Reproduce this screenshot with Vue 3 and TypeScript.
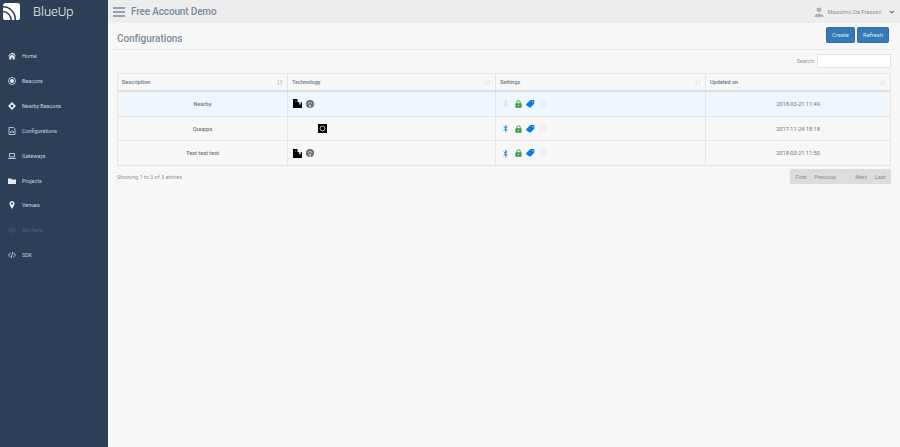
<template>
  <div class="layout">
    <aside class="sidebar">
      <div class="brand">
        <svg class="brand-logo" viewBox="0 0 20 20" width="17" height="17">
          <rect x="0" y="0" width="20" height="20" rx="3" fill="#fff" />
          <path d="M0 4.5C8 4.5 14.5 11 14.5 20M0 10C5 10 9.5 14.5 9.5 20" fill="none" stroke="#2c3f56" stroke-width="1.8" />
        </svg>
        <span class="brand-name">BlueUp</span>
      </div>
      <nav class="nav">
        <a v-for="item in navItems" :key="item.label" class="nav-item" :class="{ disabled: item.disabled }">
          <svg class="nav-icon" viewBox="0 0 16 16" width="8" height="8" v-html="item.icon"></svg>
          <span>{{ item.label }}</span>
        </a>
      </nav>
    </aside>

    <div class="main">
      <header class="topbar">
        <div class="topbar-left">
          <svg class="burger" viewBox="0 0 12 10" width="12" height="10">
            <path d="M0 1h12M0 5h12M0 9h12" stroke="#7a8a9b" stroke-width="1.4" />
          </svg>
          <span class="account">Free Account Demo</span>
        </div>
        <div class="user">
          <svg viewBox="0 0 12 12" width="10" height="10">
            <circle cx="6" cy="3.4" r="2.9" fill="#b0b0b0" />
            <path d="M0.5 12c0-3 2-4 5.5-4s5.5 1 5.5 4z" fill="#b0b0b0" />
          </svg>
          <span class="user-name">Massimo Da Frassini</span>
          <svg viewBox="0 0 10 6" width="5.5" height="4" class="chev">
            <path d="M1 1l4 3.6L9 1" fill="none" stroke="#5a6878" stroke-width="2" />
          </svg>
        </div>
      </header>

      <section class="content">
        <div class="title-row">
          <h3>Configurations</h3>
          <div class="actions">
            <button class="btn">Create</button>
            <button class="btn">Refresh</button>
          </div>
        </div>

        <div class="search-row">
          <label>Search:</label>
          <input type="text" />
        </div>

        <table class="grid">
          <colgroup>
            <col style="width: 170px" />
            <col style="width: 208px" />
            <col style="width: 210px" />
            <col />
          </colgroup>
          <thead>
            <tr>
              <th v-for="(h, i) in headers" :key="h">
                <span>{{ h }}</span>
                <svg class="sort" viewBox="0 0 7 6" width="6" height="5.5">
                  <path d="M1.5 0v5.5M0.3 4.3l1.2 1.4 1.2-1.4M5 6V0.5M3.8 1.7 5 0.3l1.2 1.4" fill="none" :stroke="i === 0 ? '#b4bbc3' : '#e0e0e0'" stroke-width="0.9" />
                </svg>
              </th>
            </tr>
          </thead>
          <tbody>
            <tr v-for="row in rows" :key="row.name" :class="{ selected: row.selected }">
              <td class="center name">{{ row.name }}</td>
              <td class="tech">
                <template v-if="row.quuppa">
                  <svg class="quuppa" viewBox="0 0 10 10" width="9" height="9">
                    <rect width="10" height="10" fill="#000" />
                    <circle cx="5" cy="5" r="2.7" fill="none" stroke="#ccc" stroke-width="1" />
                  </svg>
                </template>
                <template v-else>
                  <svg viewBox="0 0 10 10" width="9" height="9">
                    <path d="M0 0h5v3.5h2V6h1.5V3.5H10V10H0z" fill="#000" />
                    <path d="M2 1.5h1.5V3H2z" fill="#555" />
                  </svg>
                  <svg viewBox="0 0 10 10" width="8" height="8">
                    <circle cx="5" cy="5" r="5" fill="#6d6d6d" />
                    <path d="M2.5 5.5a2.5 2.5 0 0 1 5 0" fill="none" stroke="#ddd" stroke-width="0.9" />
                    <path d="M4 9V6h2v3z" fill="#ddd" />
                  </svg>
                </template>
              </td>
              <td class="settings">
                <svg class="bt" viewBox="0 0 8 12" width="5" height="9">
                  <path d="M0.8 3l6 5.5L4 11V1l2.8 2.5L0.8 9" fill="none" :stroke="row.selected ? '#d9dcdf' : '#2f8ee8'" stroke-width="1.5" />
                </svg>
                <svg class="lock" viewBox="0 0 10 11" width="7" height="8">
                  <path d="M2.5 5V3.2a2.5 2.5 0 0 1 5 0V5" fill="none" stroke="#3c9a48" stroke-width="1.3" />
                  <rect x="0.5" y="4.5" width="9" height="6.5" rx="1" fill="#3c9a48" />
                  <circle cx="5" cy="7.6" r="1" fill="#dff0e0" />
                </svg>
                <svg class="tag" viewBox="0 0 12 11" width="8.5" height="8">
                  <path d="M0.8 5.2 5 1.2 6.6 0H10.6a1.2 1.2 0 0 1 1.2 1.2V4.6L11 6 6.8 10.2a1.7 1.7 0 0 1-2.4 0L.8 7.6a1.7 1.7 0 0 1 0-2.4z" fill="#0a7be6" />
                  <circle cx="9.6" cy="2.2" r="0.8" fill="#dcecfb" />
                </svg>
                <svg class="clock" viewBox="0 0 10 10" width="7.5" height="7.5">
                  <circle cx="5" cy="5" r="4.4" fill="none" stroke="#d8dbde" stroke-width="0.9" />
                  <path d="M5 2.6V5l1.5 1" fill="none" stroke="#d8dbde" stroke-width="0.8" />
                </svg>
              </td>
              <td class="center date">{{ row.updated }}</td>
            </tr>
          </tbody>
        </table>

        <div class="table-footer">
          <span class="info">Showing 1 to 3 of 3 entries</span>
          <div class="pager">
            <span>First</span>
            <span>Previous</span>
            <span class="current">1</span>
            <span>Next</span>
            <span>Last</span>
          </div>
        </div>
      </section>
    </div>
  </div>
</template>

<script setup lang="ts">
interface NavItem {
  label: string
  icon: string
  disabled?: boolean
}

const code = '<path d="M5 3.5 1 8l4 4.5M11 3.5 15 8l-4 4.5M9.5 2 6.5 14" fill="none" stroke="currentColor" stroke-width="1.5"/>'

const navItems: NavItem[] = [
  { label: 'Home', icon: '<path d="M8 1 0 8l1 1.2L8 3.5l7 5.7L16 8l-3-2.6V2h-2v1.7zM2.5 9.6V15h4v-4h3v4h4V9.6L8 5z" fill="currentColor"/>' },
  { label: 'Beacons', icon: '<circle cx="8" cy="8" r="7" fill="none" stroke="currentColor" stroke-width="1.6"/><circle cx="8" cy="8" r="4" fill="currentColor"/>' },
  { label: 'Nearby Beacons', icon: '<path d="M8 0l8 8-8 8-8-8z" fill="currentColor"/><circle cx="8" cy="8" r="2.6" fill="#2c3f56"/>' },
  { label: 'Configurations', icon: '<path d="M2 1h9l3 3v11H2z" fill="none" stroke="currentColor" stroke-width="1.5"/><path d="M5 12V9M8 12V6M11 12V8" stroke="currentColor" stroke-width="1.4"/>' },
  { label: 'Gateways', icon: '<path d="M3 3h10v7H3z" fill="none" stroke="currentColor" stroke-width="1.6"/><path d="M0 12h16v1.5H0z" fill="currentColor"/>' },
  { label: 'Projects', icon: '<path d="M0 3h6l2 2h8v9H0z" fill="currentColor"/>' },
  { label: 'Venues', icon: '<path d="M8 0a5 5 0 0 1 5 5c0 4-5 11-5 11S3 9 3 5a5 5 0 0 1 5-5z" fill="currentColor"/><circle cx="8" cy="5" r="2" fill="#2c3f56"/>' },
  { label: 'Api Keys', icon: code, disabled: true },
  { label: 'SDK', icon: code },
]

const headers = ['Description', 'Technology', 'Settings', 'Updated on']

const rows = [
  { name: 'Nearby', updated: '2018-03-21 11:49', selected: true, quuppa: false },
  { name: 'Quuppa', updated: '2017-11-24 18:18', selected: false, quuppa: true },
  { name: 'Test test test', updated: '2018-03-21 11:50', selected: false, quuppa: false },
]
</script>

<style>
html, body {
  margin: 0;
  height: 100%;
  background: #f7f7f7;
}
#app {
  height: 100%;
}
</style>

<style scoped>
.layout {
  display: flex;
  height: 447px;
  overflow: hidden;
  font-family: Roboto, "Liberation Sans", sans-serif;
  font-size: 6px;
  color: #6a7582;
}
.sidebar {
  width: 108px;
  flex: none;
  background: #2c3f56;
  color: #cfd6dd;
}
.brand {
  display: flex;
  align-items: center;
  height: 22px;
  padding-left: 3px;
}
.brand-logo {
  flex: none;
}
.brand-name {
  margin-left: 13px;
  font-size: 13px;
  font-weight: 300;
  color: #f2f4f6;
}
.nav {
  display: flex;
  flex-direction: column;
  margin-top: 22px;
}
.nav-item {
  display: flex;
  align-items: center;
  height: 24.85px;
  padding-left: 7.5px;
  gap: 6.5px;
  font-size: 5.4px;
}
.nav-item.disabled {
  color: #55677c;
}
.nav-icon {
  flex: none;
  color: #e6eaee;
}
.disabled .nav-icon {
  color: #55677c;
}
.main {
  flex: 1;
  min-width: 0;
}
.topbar {
  display: flex;
  justify-content: space-between;
  align-items: center;
  height: 23px;
  box-sizing: border-box;
  padding: 0 6px 0 5px;
  background: #ededed;
}
.topbar-left {
  display: flex;
  align-items: center;
  gap: 6px;
}
.account {
  font-size: 10px;
  font-weight: 500;
  letter-spacing: -0.15px;
  color: #7a8a9b;
}
.user {
  display: flex;
  align-items: center;
  gap: 4px;
}
.user-name {
  font-size: 5.8px;
  color: #8a939d;
}
.chev {
  margin-left: 3px;
}
.content {
  padding: 0 9px;
}
.title-row {
  display: flex;
  justify-content: space-between;
  align-items: flex-start;
  height: 22px;
  margin: 0 -4px 0 -5px;
  padding: 4px 6px 0 5px;
  border-bottom: 1px solid #e9e9e9;
}
h3 {
  margin: 6px 0 0;
  font-size: 10px;
  font-weight: 500;
  letter-spacing: -0.05px;
  color: #7a8a9b;
}
.actions {
  display: flex;
  gap: 2px;
}
.btn {
  height: 16px;
  width: 29px;
  padding: 0;
  border: 1px solid #2e6da4;
  border-radius: 1.5px;
  background: #337ab7;
  color: #dfe8f1;
  font-family: inherit;
  font-size: 5.8px;
}
.btn + .btn {
  width: 32px;
}
.search-row {
  display: flex;
  justify-content: flex-end;
  align-items: flex-start;
  gap: 2px;
  height: 23px;
  padding-top: 4px;
  box-sizing: border-box;
  line-height: 14px;
}
.search-row input {
  width: 74px;
  height: 14px;
  padding: 0;
  box-sizing: border-box;
  border: 1px solid #e2e2e2;
  background: #fff;
}
.search-row label {
  font-size: 5.5px;
  color: #8c97a3;
}
.grid {
  width: 774px;
  table-layout: fixed;
  border-collapse: collapse;
  border: 1px solid #dedede;
}
th, td {
  border: 1px solid #e4e4e4;
  padding: 0;
}
th {
  height: 16px;
  padding: 0 4px;
  border-bottom: 2px solid #dedede;
  text-align: left;
  font-size: 5.5px;
  font-weight: 500;
  position: relative;
}
.sort {
  position: absolute;
  right: 4px;
  top: 6px;
}
td {
  height: 23.7px;
  font-size: 5.6px;
}
.selected td {
  background: #eff7fe;
}
.center {
  text-align: center;
}
.name {
  font-weight: 500;
}
.tech {
  padding-left: 4.5px;
  white-space: nowrap;
}
.settings {
  padding-left: 7px;
  white-space: nowrap;
}
.tech svg, .settings svg {
  vertical-align: middle;
}
.tech svg + svg {
  margin-left: 4px;
}
.settings .lock {
  margin-left: 7px;
}
.settings .tag {
  margin-left: 4px;
}
.settings .clock {
  margin-left: 4px;
}
.quuppa {
  margin-left: 25px;
}
.table-footer {
  display: flex;
  justify-content: space-between;
  align-items: center;
  width: 774px;
  margin-top: 3px;
}
.info {
  font-size: 5.5px;
  color: #8d959e;
}
.pager {
  display: flex;
  align-items: center;
  height: 15px;
  padding: 0 1.5px;
  border-radius: 2px;
  background: #dcdcdc;
  color: #8a8a8a;
  font-size: 5.6px;
}
.pager span {
  padding: 0 2.5px;
  margin: 0 1.5px;
}
.pager .current {
  color: #efefef;
}
</style>
